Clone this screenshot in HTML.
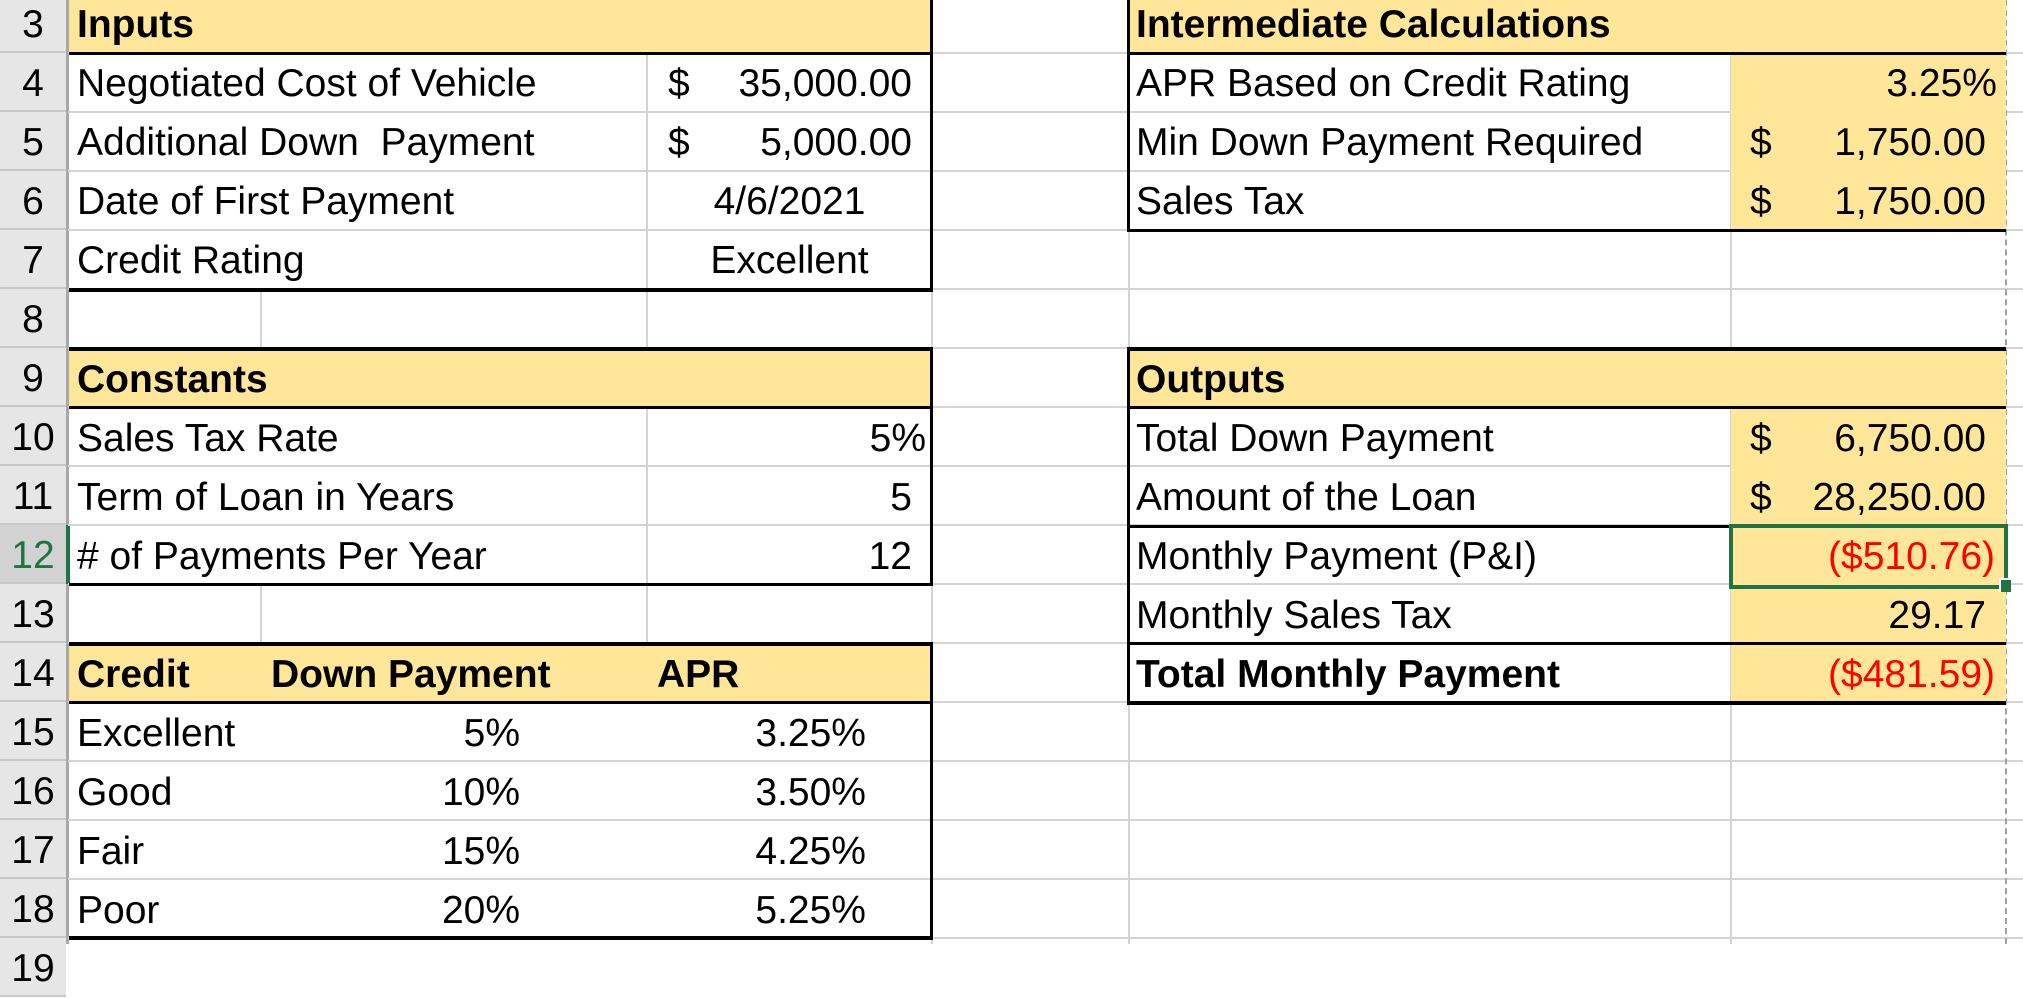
<!DOCTYPE html>
<html><head><meta charset="utf-8"><style>
body{margin:0;width:2023px;height:944px;overflow:hidden;background:#fff;position:relative;font-family:"Liberation Sans",Arial,sans-serif;font-size:39px;color:#000}
div{position:absolute}
.t{height:59px;line-height:61px;white-space:nowrap}
.b{font-weight:bold}
.r{text-align:right}
.c{text-align:center}
.h{left:0;width:66px;background:#e6e6e6;text-align:center;height:57px;line-height:61px;border-bottom:2px solid #c8c8c8}
.gh{height:2px;background:#d4d4d4;left:68px;width:1955px}
.gv{width:2px;background:#d4d4d4}
.y{background:#ffe699}
.k{background:#000}
.red{color:#ff0000}
</style></head><body>

<!-- row headers -->
<div class="h" style="top:-6px">3</div>
<div class="h" style="top:53px">4</div>
<div class="h" style="top:112px">5</div>
<div class="h" style="top:171px">6</div>
<div class="h" style="top:230px">7</div>
<div class="h" style="top:289px">8</div>
<div class="h" style="top:348px">9</div>
<div class="h" style="top:407px">10</div>
<div class="h" style="top:466px">11</div>
<div class="h" style="top:525px;background:#d2d2d2;color:#217346">12</div>
<div class="h" style="top:584px">13</div>
<div class="h" style="top:643px">14</div>
<div class="h" style="top:702px">15</div>
<div class="h" style="top:761px">16</div>
<div class="h" style="top:820px">17</div>
<div class="h" style="top:879px">18</div>
<div class="h" style="top:938px">19</div>
<div style="left:66px;top:0;width:3px;height:944px;background:#a8a8a8"></div>
<div style="left:66px;top:525px;width:4px;height:59px;background:#217346"></div>

<!-- horizontal gridlines -->
<div class="gh" style="top:52px"></div><div class="gh" style="top:111px"></div><div class="gh" style="top:170px"></div>
<div class="gh" style="top:229px"></div><div class="gh" style="top:288px"></div><div class="gh" style="top:347px"></div>
<div class="gh" style="top:406px"></div><div class="gh" style="top:465px"></div><div class="gh" style="top:524px"></div>
<div class="gh" style="top:583px"></div><div class="gh" style="top:642px"></div><div class="gh" style="top:701px"></div>
<div class="gh" style="top:760px"></div><div class="gh" style="top:819px"></div><div class="gh" style="top:878px"></div>
<div class="gh" style="top:937px"></div>

<!-- vertical gridlines -->
<div class="gv" style="left:931px;top:0;height:944px"></div>
<div class="gv" style="left:1128px;top:0;height:944px"></div>
<div class="gv" style="left:1730px;top:0;height:944px"></div>
<div class="gv" style="left:646px;top:53px;height:296px"></div>
<div class="gv" style="left:646px;top:408px;height:236px"></div>
<div class="gv" style="left:260px;top:290px;height:59px"></div>
<div class="gv" style="left:260px;top:585px;height:59px"></div>
<div style="left:2005px;top:0;height:944px;width:0;border-left:2px dashed #a0a0a0"></div>

<!-- yellow fills -->
<div class="y" style="left:69px;top:0;width:862px;height:53px"></div>
<div class="y" style="left:69px;top:349px;width:862px;height:59px"></div>
<div class="y" style="left:69px;top:644px;width:862px;height:59px"></div>
<div class="y" style="left:1129px;top:0;width:877px;height:53px"></div>
<div class="y" style="left:1731px;top:53px;width:275px;height:178px"></div>
<div class="y" style="left:1129px;top:349px;width:877px;height:59px"></div>
<div class="y" style="left:1731px;top:408px;width:275px;height:295px"></div>

<!-- black borders left -->
<div class="k" style="left:69px;top:52px;width:864px;height:3px"></div>
<div class="k" style="left:69px;top:288px;width:864px;height:4px"></div>
<div class="k" style="left:69px;top:347px;width:864px;height:4px"></div>
<div class="k" style="left:69px;top:406px;width:864px;height:3px"></div>
<div class="k" style="left:69px;top:583px;width:864px;height:3px"></div>
<div class="k" style="left:69px;top:642px;width:864px;height:4px"></div>
<div class="k" style="left:69px;top:701px;width:864px;height:3px"></div>
<div class="k" style="left:69px;top:936px;width:864px;height:4px"></div>
<div class="k" style="left:930px;top:0;width:3px;height:291px"></div>
<div class="k" style="left:930px;top:348px;width:3px;height:237px"></div>
<div class="k" style="left:930px;top:643px;width:3px;height:297px"></div>

<!-- black borders right -->
<div class="k" style="left:1127px;top:0;width:3px;height:232px"></div>
<div class="k" style="left:1127px;top:348px;width:3px;height:357px"></div>
<div class="k" style="left:1127px;top:52px;width:879px;height:3px"></div>
<div class="k" style="left:1127px;top:229px;width:879px;height:3px"></div>
<div class="k" style="left:1127px;top:347px;width:879px;height:4px"></div>
<div class="k" style="left:1127px;top:406px;width:879px;height:3px"></div>
<div class="k" style="left:1127px;top:525px;width:604px;height:3px"></div>
<div class="k" style="left:1127px;top:642px;width:879px;height:3px"></div>
<div class="k" style="left:1127px;top:701px;width:879px;height:4px"></div>

<!-- selected cell -->
<div style="left:1729px;top:524px;width:271px;height:57px;border:4px solid #217346"></div>
<div style="left:1999px;top:578px;width:10px;height:12px;background:#217346;border-left:2px solid #fff;border-top:2px solid #fff"></div>

<!-- left text -->
<div class="t b" style="left:77px;top:-6px">Inputs</div>
<div class="t" style="left:77px;top:53px">Negotiated Cost of Vehicle</div>
<div class="t" style="left:77px;top:112px">Additional Down&nbsp; Payment</div>
<div class="t" style="left:77px;top:171px">Date of First Payment</div>
<div class="t" style="left:77px;top:230px">Credit Rating</div>
<div class="t" style="left:668px;top:53px">$</div>
<div class="t r" style="left:700px;width:212px;top:53px">35,000.00</div>
<div class="t" style="left:668px;top:112px">$</div>
<div class="t r" style="left:700px;width:212px;top:112px">5,000.00</div>
<div class="t c" style="left:647px;width:285px;top:171px">4/6/2021</div>
<div class="t c" style="left:647px;width:285px;top:230px">Excellent</div>

<div class="t b" style="left:77px;top:349px">Constants</div>
<div class="t" style="left:77px;top:408px">Sales Tax Rate</div>
<div class="t" style="left:77px;top:467px">Term of Loan in Years</div>
<div class="t" style="left:77px;top:526px"># of Payments Per Year</div>
<div class="t r" style="left:700px;width:226px;top:408px">5%</div>
<div class="t r" style="left:700px;width:212px;top:467px">5</div>
<div class="t r" style="left:700px;width:212px;top:526px">12</div>

<div class="t b" style="left:77px;top:644px">Credit</div>
<div class="t b" style="left:271px;top:644px">Down Payment</div>
<div class="t b" style="left:657px;top:644px">APR</div>
<div class="t" style="left:77px;top:703px">Excellent</div>
<div class="t" style="left:77px;top:762px">Good</div>
<div class="t" style="left:77px;top:821px">Fair</div>
<div class="t" style="left:77px;top:880px">Poor</div>
<div class="t r" style="left:300px;width:220px;top:703px">5%</div>
<div class="t r" style="left:300px;width:220px;top:762px">10%</div>
<div class="t r" style="left:300px;width:220px;top:821px">15%</div>
<div class="t r" style="left:300px;width:220px;top:880px">20%</div>
<div class="t r" style="left:650px;width:216px;top:703px">3.25%</div>
<div class="t r" style="left:650px;width:216px;top:762px">3.50%</div>
<div class="t r" style="left:650px;width:216px;top:821px">4.25%</div>
<div class="t r" style="left:650px;width:216px;top:880px">5.25%</div>

<!-- right text -->
<div class="t b" style="left:1136px;top:-6px">Intermediate Calculations</div>
<div class="t" style="left:1136px;top:53px">APR Based on Credit Rating</div>
<div class="t" style="left:1136px;top:112px">Min Down Payment Required</div>
<div class="t" style="left:1136px;top:171px">Sales Tax</div>
<div class="t r" style="left:1740px;width:257px;top:53px">3.25%</div>
<div class="t" style="left:1750px;top:112px">$</div>
<div class="t r" style="left:1780px;width:206px;top:112px">1,750.00</div>
<div class="t" style="left:1750px;top:171px">$</div>
<div class="t r" style="left:1780px;width:206px;top:171px">1,750.00</div>

<div class="t b" style="left:1136px;top:349px">Outputs</div>
<div class="t" style="left:1136px;top:408px">Total Down Payment</div>
<div class="t" style="left:1136px;top:467px">Amount of the Loan</div>
<div class="t" style="left:1136px;top:526px">Monthly Payment (P&amp;I)</div>
<div class="t" style="left:1136px;top:585px">Monthly Sales Tax</div>
<div class="t b" style="left:1136px;top:644px">Total Monthly Payment</div>
<div class="t" style="left:1750px;top:408px">$</div>
<div class="t r" style="left:1780px;width:206px;top:408px">6,750.00</div>
<div class="t" style="left:1750px;top:467px">$</div>
<div class="t r" style="left:1780px;width:206px;top:467px">28,250.00</div>
<div class="t r red" style="left:1740px;width:255px;top:526px">($510.76)</div>
<div class="t r" style="left:1740px;width:246px;top:585px">29.17</div>
<div class="t r red" style="left:1740px;width:255px;top:644px">($481.59)</div>
</body></html>
